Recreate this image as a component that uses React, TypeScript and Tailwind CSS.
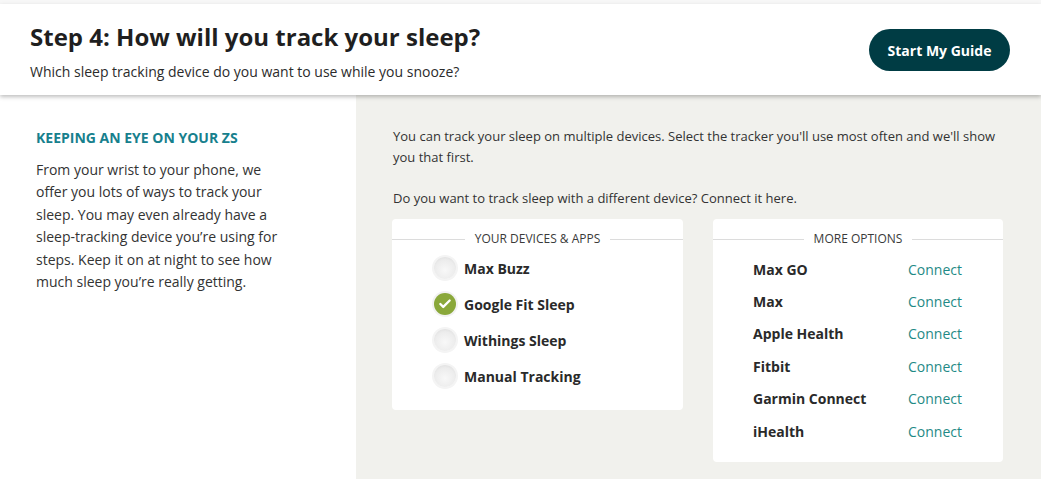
import { Check } from 'lucide-react';

const myDevices = [
  { name: 'Max Buzz', selected: false },
  { name: 'Google Fit Sleep', selected: true },
  { name: 'Withings Sleep', selected: false },
  { name: 'Manual Tracking', selected: false },
];

const moreOptions = ['Max GO', 'Max', 'Apple Health', 'Fitbit', 'Garmin Connect', 'iHealth'];

function CardTitle({ label }: { label: string }) {
  return (
    <div className="flex items-center gap-[10px] pt-[12px]">
      <div className="h-px flex-1 bg-[#dcdcdc]" />
      <span className="text-[12px] leading-[16px] uppercase text-[#3a3a3a]">{label}</span>
      <div className="h-px flex-1 bg-[#dcdcdc]" />
    </div>
  );
}

function Radio({ selected }: { selected: boolean }) {
  if (selected) {
    return (
      <span className="flex h-[22px] w-[22px] items-center justify-center rounded-full bg-[#8aa83a] shadow-[0_0_0_2px_#f2f2f2]">
        <Check className="h-[14px] w-[14px] text-white" strokeWidth={4} />
      </span>
    );
  }
  return (
    <span className="block h-[22px] w-[22px] rounded-full bg-[radial-gradient(circle_at_50%_60%,#f8f8f8_0%,#ececec_60%,#d4d4d4_100%)] shadow-[0_0_0_2px_#f4f4f4]" />
  );
}

export default function App() {
  return (
    <div className="min-h-[479px] bg-[#f7f7f7] pt-[4px] font-['Open_Sans',sans-serif] text-[#333]">
      <header className="relative z-10 flex items-start justify-between bg-white pl-[30px] pr-[31px] pt-[18px] pb-[13px] shadow-[0_2px_4px_rgba(0,0,0,0.25)]">
        <div>
          <h1 className="text-[24px] leading-[30px] font-bold text-[#1f1f1f]">
            Step 4: How will you track your sleep?
          </h1>
          <p className="mt-[10px] text-[14px] leading-[20px] text-[#2b2b2b]">
            Which sleep tracking device do you want to use while you snooze?
          </p>
        </div>
        <button className="mt-[7px] h-[42px] w-[141px] rounded-full bg-[#003c44] text-[14px] font-bold text-white">
          Start My Guide
        </button>
      </header>

      <div className="flex min-h-[384px]">
        <aside className="w-[356px] shrink-0 bg-white pl-[36px] pr-[78px] pt-[33px]">
          <h2 className="text-[14px] leading-[20px] font-bold uppercase text-[#17808d]">
            Keeping an eye on your Zs
          </h2>
          <p className="mt-[11px] text-[14px] leading-[22.4px] text-[#333]">
            From your wrist to your phone, we offer you lots of ways to track your sleep. You may even already have a
            sleep-tracking device you’re using for steps. Keep it on at night to see how much sleep you’re really
            getting.
          </p>
        </aside>

        <main className="flex-1 bg-[#f1f1ed] pl-[36px] pt-[31px]">
          <div className="w-[611px]">
            <p className="pl-px text-[13px] leading-[21px] text-[#333]">
              You can track your sleep on multiple devices. Select the tracker you'll use most often and we'll show
              you that first.
            </p>
            <p className="mt-[20px] pl-px text-[13px] leading-[21px] text-[#333]">
              Do you want to track sleep with a different device? Connect it here.
            </p>

            <div className="mt-[10px] flex items-start gap-[30px]">
              <section className="w-[291px] rounded-[4px] bg-white pb-[16px]">
                <CardTitle label="Your Devices & Apps" />
                <ul className="mt-[3px] pl-[42px]">
                  {myDevices.map((d) => (
                    <li key={d.name} className="flex h-[36px] items-center gap-[8px]">
                      <Radio selected={d.selected} />
                      <span className="text-[14px] font-bold text-[#2a2a2a]">{d.name}</span>
                    </li>
                  ))}
                </ul>
              </section>

              <section className="w-[290px] rounded-[4px] bg-white pb-[15px]">
                <CardTitle label="More Options" />
                <ul className="mt-[6px] pl-[40px]">
                  {moreOptions.map((name) => (
                    <li key={name} className="flex h-[32.4px] items-center">
                      <span className="w-[155px] text-[14px] font-bold text-[#2a2a2a]">{name}</span>
                      <a href="#" className="text-[14px] text-[#1f8a86]">
                        Connect
                      </a>
                    </li>
                  ))}
                </ul>
              </section>
            </div>
          </div>
        </main>
      </div>
    </div>
  );
}
